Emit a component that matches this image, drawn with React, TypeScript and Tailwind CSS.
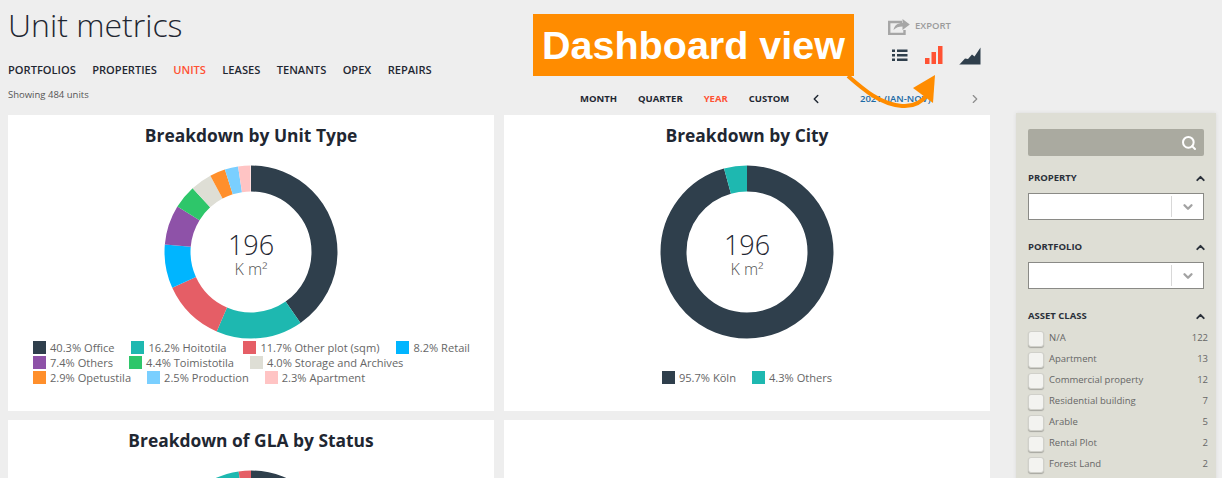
import { ChevronDown, ChevronLeft, ChevronRight, ChevronUp, Search } from 'lucide-react';

const DARK = '#2f3f4c';

type Slice = { pct: number; color: string };

const unitType: Slice[] = [
  { pct: 40.3, color: DARK },
  { pct: 16.2, color: '#1eb8b0' },
  { pct: 11.7, color: '#e55e66' },
  { pct: 8.2, color: '#00b5ff' },
  { pct: 7.4, color: '#8e52a8' },
  { pct: 4.4, color: '#2ec66a' },
  { pct: 4.0, color: '#deded5' },
  { pct: 2.9, color: '#ff8f2b' },
  { pct: 2.5, color: '#7acfff' },
  { pct: 2.3, color: '#ffc4c4' },
];

const city: Slice[] = [
  { pct: 95.7, color: DARK },
  { pct: 4.3, color: '#1eb8b0' },
];

const glaStatus: Slice[] = [
  { pct: 80, color: DARK },
  { pct: 17.7, color: '#1eb8b0' },
  { pct: 2.3, color: '#e55e66' },
];

const unitLegend = [
  [
    { label: '40.3% Office', color: DARK },
    { label: '16.2% Hoitotila', color: '#1eb8b0' },
    { label: '11.7% Other plot (sqm)', color: '#e55e66' },
    { label: '8.2% Retail', color: '#00b5ff' },
  ],
  [
    { label: '7.4% Others', color: '#8e52a8' },
    { label: '4.4% Toimistotila', color: '#2ec66a' },
    { label: '4.0% Storage and Archives', color: '#deded5' },
  ],
  [
    { label: '2.9% Opetustila', color: '#ff8f2b' },
    { label: '2.5% Production', color: '#7acfff' },
    { label: '2.3% Apartment', color: '#ffc4c4' },
  ],
];

const tabs = ['PORTFOLIOS', 'PROPERTIES', 'UNITS', 'LEASES', 'TENANTS', 'OPEX', 'REPAIRS'];
const periods = ['MONTH', 'QUARTER', 'YEAR', 'CUSTOM'];
const assetClasses: [string, number][] = [
  ['N/A', 122],
  ['Apartment', 13],
  ['Commercial property', 12],
  ['Residential building', 7],
  ['Arable', 5],
  ['Rental Plot', 2],
  ['Forest Land', 2],
];

function Donut({ slices, showCenter = true }: { slices: Slice[]; showCenter?: boolean }) {
  let offset = 0;
  return (
    <div className="relative h-[174px] w-[174px] shrink-0">
      <svg width="174" height="174" viewBox="0 0 174 174" className="-rotate-90">
        {slices.map((s) => {
          const el = (
            <circle
              key={s.color}
              cx="87"
              cy="87"
              r="73.5"
              fill="none"
              stroke={s.color}
              strokeWidth="26"
              pathLength={100}
              strokeDasharray={`${s.pct} ${100 - s.pct}`}
              strokeDashoffset={-offset}
            />
          );
          offset += s.pct;
          return el;
        })}
      </svg>
      {showCenter && (
        <div className="absolute inset-0 flex flex-col items-center justify-center pt-[5px]">
          <div className="text-[27px] font-light leading-[28px] text-[#1f2732]">196</div>
          <div className="text-[16px] font-light leading-[20px] text-[#555]">K m²</div>
        </div>
      )}
    </div>
  );
}

function LegendItem({ label, color }: { label: string; color: string }) {
  return (
    <div className="flex items-center gap-[4px]">
      <span className="h-[13px] w-[13px] shrink-0" style={{ backgroundColor: color }} />
      <span className="whitespace-nowrap text-[11.1px] leading-[15px] text-[#666]">{label}</span>
    </div>
  );
}

function FilterHead({ title }: { title: string }) {
  return (
    <div className="flex h-[15px] items-center justify-between">
      <span className="text-[9.5px] font-bold text-[#2a303a]">{title}</span>
      <ChevronUp size={13} strokeWidth={3.5} className="-mr-[3px] text-[#2a303a]" />
    </div>
  );
}

function SelectBox() {
  return (
    <div className="mt-[7px] flex h-[27px] items-center border border-[#8a8a86] bg-white">
      <div className="flex-1" />
      <div className="flex h-[21px] w-[32px] items-center justify-center border-l border-[#d8d8d8]">
        <ChevronDown size={14} strokeWidth={4} className="text-[#a3a3a3]" />
      </div>
    </div>
  );
}

export default function App() {
  return (
    <div className="relative flex h-[478px] w-[1222px] overflow-hidden bg-[#eeeeee] font-['Open_Sans',sans-serif]">
      <div className="ml-[8px] w-[982px] shrink-0">
        {/* Header */}
        <div className="flex h-[115px]">
          <div className="w-[564px]">
            <h1 className="mt-[3px] text-[32px] font-light leading-[44px] text-[#1f2732]">Unit metrics</h1>
            <div className="mt-[15px] flex gap-[16.4px] text-[11.1px] font-semibold leading-[16px] text-[#1f2732]">
              {tabs.map((t) => (
                <span key={t} className={t === 'UNITS' ? 'text-[#ff5233]' : ''}>
                  {t}
                </span>
              ))}
            </div>
            <div className="mt-[11px] text-[9.5px] leading-[12px] text-[#555]">Showing 484 units</div>
          </div>

          <div className="flex flex-1 flex-col">
            <div className="ml-[316px] mt-[16px] flex h-[20px] items-center">
              <svg width="22" height="18" viewBox="0 0 22 18" fill="none" className="shrink-0">
                <path d="M14 5H1.2v12h15.3v-4" stroke="#a6a6a6" strokeWidth="2.4" />
                <path d="M5.5 13c.8-4.500 4-7 9-7V2l7.300 5.500-7.300 5.500V9.500c-4 0-6.500 1-9 3.500z" fill="#a6a6a6" />
              </svg>
              <span className="ml-[5px] text-[9.5px] font-semibold text-[#9b9b9b]">EXPORT</span>
            </div>
            <div className="ml-[320px] mt-[9px] flex h-[20px] items-end">
              <svg width="16" height="13" viewBox="0 0 16 13" className="mb-[3px] shrink-0" fill="#2f3f4c">
                <rect x="0" y="0.500" width="3" height="2.500" />
                <rect x="0" y="5" width="3" height="2.500" />
                <rect x="0" y="9.500" width="3" height="2.500" />
                <rect x="5" y="0.500" width="10.500" height="2.500" />
                <rect x="5" y="5" width="10.500" height="2.500" />
                <rect x="5" y="9.500" width="10.500" height="2.500" />
              </svg>
              <svg width="18" height="20" viewBox="0 0 18 20" className="ml-[17px] shrink-0" fill="#ff5233">
                <rect x="0" y="13" width="4.500" height="6" />
                <rect x="6.500" y="7" width="4.500" height="12" />
                <rect x="13" y="1" width="4.500" height="18" />
              </svg>
              <svg width="22" height="18" viewBox="0 0 22 18" className="ml-[16px] shrink-0" fill="#2f3f4c">
                <path d="M0 18 6 11.500 9 12 13 7.500 15.500 9.500 21.500 0.500V17.500H0z" />
              </svg>
            </div>
            <div className="ml-[8px] mt-[26px] flex h-[16px] items-center text-[9.5px] font-bold text-[#1f2732]">
              <div className="flex w-[231px] gap-[21px]">
                {periods.map((p) => (
                  <span key={p} className={p === 'YEAR' ? 'text-[#ff5233]' : ''}>
                    {p}
                  </span>
                ))}
              </div>
              <ChevronLeft size={14} strokeWidth={2.500} className="-ml-[2px] shrink-0 text-[#1f2732]" />
              <span className="ml-[37px] w-[106px] whitespace-nowrap text-[9.5px] font-semibold text-[#1c6aa5]">
                2021 (JAN-NOV)
              </span>
              <ChevronRight size={14} strokeWidth={2} className="ml-[2px] shrink-0 text-[#8c8c8c]" />
            </div>
          </div>
        </div>

        {/* Charts */}
        <div className="grid grid-cols-[486px_486px] grid-rows-[296px_200px] gap-x-[10px] gap-y-[9px]">
          <section className="flex flex-col items-center bg-white">
            <h2 className="mt-[6px] text-[17.4px] font-bold leading-[28px] text-[#1f2732]">Breakdown by Unit Type</h2>
            <div className="mt-[16px]">
              <Donut slices={unitType} />
            </div>
            <div className="mt-[0.5px] flex w-full flex-col pl-[25px]">
              {unitLegend.map((row, i) => (
                <div key={i} className={i === 0 ? 'flex gap-[17px]' : 'flex gap-[16px]'}>
                  {row.map((item) => (
                    <LegendItem key={item.label} {...item} />
                  ))}
                </div>
              ))}
            </div>
          </section>

          <section className="flex flex-col items-center bg-white">
            <h2 className="mt-[6px] text-[17.4px] font-bold leading-[28px] text-[#1f2732]">Breakdown by City</h2>
            <div className="mt-[16px]">
              <Donut slices={city} />
            </div>
            <div className="mt-[31px] flex gap-[16px]">
              <LegendItem label="95.7% Köln" color={DARK} />
              <LegendItem label="4.3% Others" color="#1eb8b0" />
            </div>
          </section>

          <section className="flex flex-col items-center overflow-hidden bg-white">
            <h2 className="mt-[6px] text-[17.4px] font-bold leading-[28px] text-[#1f2732]">Breakdown of GLA by Status</h2>
            <div className="mt-[16px]">
              <Donut slices={glaStatus} showCenter={false} />
            </div>
          </section>

          <section className="bg-white" />
        </div>
      </div>

      {/* Filters */}
      <aside className="ml-[26px] mt-[113px] h-[400px] w-[200px] shrink-0 bg-[#deded5] px-[12px] pt-[16px] shadow-[0_0_4px_rgba(0,0,0,0.08)]">
        <div className="flex h-[27px] items-center justify-end rounded-[2px] bg-[#aaaaa0] pr-[7px]">
          <Search size={16} strokeWidth={3} className="text-white" />
        </div>
        <div className="mt-[15px]">
          <FilterHead title="PROPERTY" />
          <SelectBox />
        </div>
        <div className="mt-[20px]">
          <FilterHead title="PORTFOLIO" />
          <SelectBox />
        </div>
        <div className="mt-[20px]">
          <FilterHead title="ASSET CLASS" />
          <div className="mt-[4px] flex flex-col">
            {assetClasses.map(([name, n]) => (
              <div key={name} className="flex h-[21px] items-center text-[9.5px] text-[#666]">
                <span className="h-[16px] w-[16px] shrink-0 rounded-[3px] border border-[#d0d0ca] bg-[#f3f3f0] shadow-[0_1px_1px_rgba(0,0,0,0.25)]" />
                <span className="ml-[5px] flex-1">{name}</span>
                <span className="-mr-[4px]">{n}</span>
              </div>
            ))}
          </div>
        </div>
      </aside>

      {/* Callout */}
      <div className="absolute left-[533px] top-[14px] flex h-[62px] w-[321px] items-center justify-center bg-[#ff8c00] pt-[2px] font-['Liberation_Sans',sans-serif] text-[39.5px] font-bold leading-none text-white">
        Dashboard view
      </div>
      <svg width="110" height="50" viewBox="0 0 110 50" fill="none" className="absolute left-[840px] top-[68px]">
        <path d="M8 8C24 22 40 36 62 38 74 39 82 34 88 26" stroke="#ff8c00" strokeWidth="4" />
        <path d="M95 7 73 20 93 35z" fill="#ff8c00" />
      </svg>
    </div>
  );
}
